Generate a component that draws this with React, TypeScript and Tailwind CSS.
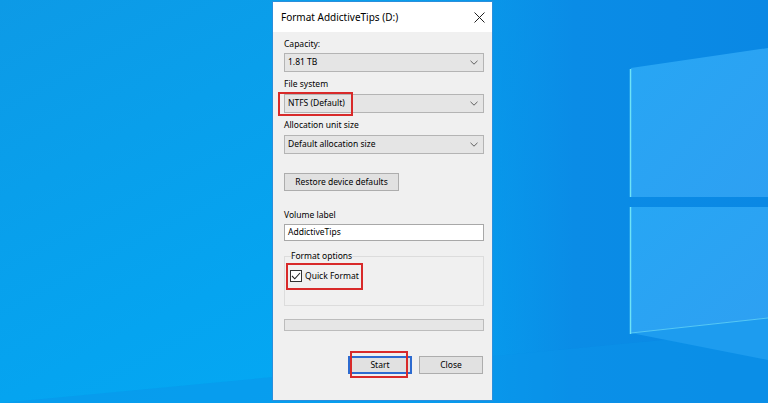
import React from "react";

const font = { fontFamily: '"Noto Sans", "Open Sans", sans-serif' };

function Chevron() {
  return (
    <svg width="8" height="5" viewBox="0 0 8 5" className="text-[#606060]">
      <path d="M0.5 0.8 L4 4.2 L7.5 0.8" fill="none" stroke="currentColor" strokeWidth="1" />
    </svg>
  );
}

function Combo({ value }: { value: string }) {
  return (
    <div className="flex h-[19px] w-[200px] items-center justify-between border border-[#b4b4b4] bg-[#e5e5e5] pl-[3px] pr-[5px]">
      <span className="leading-none">{value}</span>
      <Chevron />
    </div>
  );
}

function Label({ text, className = "" }: { text: string; className?: string }) {
  return <div className={"h-[14px] leading-[14px] " + className}>{text}</div>;
}

function Desktop() {
  // windows hero wallpaper
  return (
    <svg className="absolute inset-0" width="768" height="403" viewBox="0 0 768 403">
      <defs>
        <linearGradient id="bg" x1="0" y1="0" x2="1" y2="1">
          <stop offset="0" stopColor="#0d9ae6" />
          <stop offset="0.5" stopColor="#05a4f0" />
          <stop offset="1" stopColor="#02aef8" />
        </linearGradient>
        <linearGradient id="right" x1="0" y1="0" x2="1" y2="0">
          <stop offset="0" stopColor="#0a8fe6" stopOpacity="0" />
          <stop offset="0.5" stopColor="#0a8ce6" />
          <stop offset="1" stopColor="#0a88e4" />
        </linearGradient>
        <linearGradient id="pane" x1="0" y1="0" x2="1" y2="1">
          <stop offset="0" stopColor="#27a6f4" />
          <stop offset="1" stopColor="#2ea0f2" />
        </linearGradient>
      </defs>
      <rect width="768" height="403" fill="url(#bg)" />
      <rect x="380" width="388" height="403" fill="url(#right)" />
      <polygon points="0,403 768,330 768,403" fill="#0a94ea" opacity="0.5" />
      <polygon points="631,68 768,48 768,197 631,197" fill="url(#pane)" />
      <polygon points="631,207 768,207 768,318 631,333" fill="url(#pane)" />
      <polygon points="631,333 768,318 768,360" fill="#1d9cef" />
      <line x1="630.5" y1="69" x2="630.5" y2="197" stroke="#6ee3f7" strokeWidth="1.5" />
      <line x1="630.5" y1="207" x2="630.5" y2="334" stroke="#6ee3f7" strokeWidth="1.5" />
      <line x1="631" y1="333" x2="768" y2="318" stroke="#56c8f5" strokeWidth="1" />
    </svg>
  );
}

export default function App() {
  return (
    <div className="relative h-[403px] w-[768px] overflow-hidden text-[8.5px] text-black" style={font}>
      <Desktop />
      <div className="absolute left-[272px] top-[1px] flex h-[400px] w-[221px] flex-col border border-[#2a8fdc] bg-[#f0f0f0]">
        <div className="flex h-[30px] items-center justify-between bg-white pl-[8px] pr-[6px]">
          <span className="text-[10px]">Format AddictiveTips (D:)</span>
          <svg width="11" height="11" viewBox="0 0 11 11" className="mr-[1px]">
            <path d="M0.5 0.5 L10.5 10.5 M10.5 0.5 L0.5 10.5" stroke="#202020" strokeWidth="1" />
          </svg>
        </div>
        <div className="flex flex-col pl-[11px]">
          <Label text="Capacity:" className="mt-[5px]" />
          <div className="mt-[2px]">
            <Combo value="1.81 TB" />
          </div>
          <Label text="File system" className="mt-[5px]" />
          <div className="relative mt-[3px]">
            <Combo value="NTFS (Default)" />
            <div className="absolute left-[-6px] top-[-2px] h-[24px] w-[75px] border-2 border-[#d82a2a]" />
          </div>
          <Label text="Allocation unit size" className="mt-[5px]" />
          <div className="mt-[3px]">
            <Combo value="Default allocation size" />
          </div>
          <button className="mt-[19px] flex h-[18px] w-[115px] items-center justify-center border border-[#adadad] bg-[#e1e1e1] leading-none">
            Restore device defaults
          </button>
          <Label text="Volume label" className="mt-[17px]" />
          <div className="mt-[2px] flex h-[17px] w-[200px] items-center border border-[#a8a8a8] bg-white pl-[3px] leading-none">
            AddictiveTips
          </div>
          <div className="relative mt-[15px] h-[50px] w-[200px] border border-[#dcdcdc]">
            <span className="absolute left-[6px] top-[-8px] bg-[#f0f0f0] leading-[14px]">Format options</span>
            <div className="relative ml-[5px] mt-[13px] flex items-center gap-[3px]">
              <div className="flex h-[12px] w-[12px] items-center justify-center border border-[#333] bg-white">
                <svg width="10" height="8" viewBox="0 0 10 8">
                  <path d="M1 4 L3.8 6.8 L9 1" fill="none" stroke="#222" strokeWidth="1.1" />
                </svg>
              </div>
              <span className="leading-none">Quick Format</span>
              <div className="absolute left-[-4px] top-[-7px] h-[27px] w-[77px] border-2 border-[#d82a2a]" />
            </div>
          </div>
          <div className="mt-[13px] h-[12px] w-[200px] border border-[#bcbcbc] bg-[#e6e6e6]" />
          <div className="mt-[25px] flex w-[200px] justify-end gap-[7px] pr-[1px]">
            <div className="relative">
              <button className="flex h-[18px] w-[64px] items-center justify-center border-2 border-[#2d6bd0] bg-[#e1e1e1] leading-none">
                Start
              </button>
              <div className="absolute left-[2px] top-[-5px] h-[27px] w-[58px] border-2 border-[#d82a2a]" />
            </div>
            <button className="flex h-[18px] w-[64px] items-center justify-center border border-[#adadad] bg-[#e1e1e1] leading-none">
              Close
            </button>
          </div>
        </div>
      </div>
    </div>
  );
}
